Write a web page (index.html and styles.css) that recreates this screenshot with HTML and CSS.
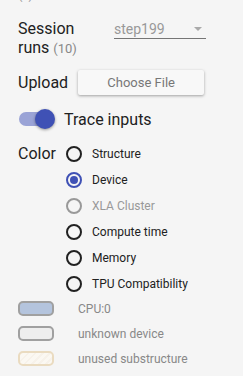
FILE: index.html
```html
<!DOCTYPE html>
<html lang="en">
<head>
  <meta charset="UTF-8" />
  <meta name="viewport" content="width=device-width, initial-scale=1.0"/>
  <title>Graph controls</title>
  <link rel="stylesheet" href="styles.css">
</head>
<body>

  <div class="sidebar">
    <div class="help">(?)</div>

    <div class="row session">
      <div class="session-label">Session<br>runs <span class="count">(10)</span></div>
      <div class="dropdown">
        <span>step199</span>
        <svg width="8" height="4" viewBox="0 0 8 4"><path d="M0 0h8L4 4z" fill="#aaa"/></svg>
      </div>
    </div>

    <div class="row upload">
      <span class="label">Upload</span>
      <button class="file-btn">Choose File</button>
    </div>

    <div class="row toggle-row">
      <div class="toggle"><div class="track"></div><div class="thumb"></div></div>
      <span class="label">Trace inputs</span>
    </div>

    <div class="row color">
      <span class="label color-label">Color</span>
      <div class="radios">
        <div class="radio"><span class="circle"></span>Structure</div>
        <div class="radio checked"><span class="circle"></span>Device</div>
        <div class="radio disabled"><span class="circle"></span>XLA Cluster</div>
        <div class="radio"><span class="circle"></span>Compute time</div>
        <div class="radio"><span class="circle"></span>Memory</div>
        <div class="radio"><span class="circle"></span>TPU Compatibility</div>
      </div>
    </div>

    <div class="legend">
      <div class="legend-item"><span class="swatch cpu"></span>CPU:0</div>
      <div class="legend-item"><span class="swatch unknown"></span>unknown device</div>
      <div class="legend-item"><span class="swatch unused"></span>unused substructure</div>
    </div>
  </div>

</body>
</html>
```

FILE: styles.css
```css
* {
  box-sizing: border-box;
  font-family: Roboto, sans-serif;
}

body {
  margin: 0;
  background: #f5f5f5;
  color: #212121;
}

.sidebar {
  padding-left: 18px;
  width: 243px;
  height: 376px;
  overflow: hidden;
}

.help {
  font-size: 13px;
  color: #999;
  line-height: 14px;
  margin-top: -12px;
}

.row {
  display: flex;
  align-items: center;
}

.label {
  font-size: 16px;
}

.session {
  margin-top: 17px;
  align-items: flex-start;
}

.session-label {
  width: 96px;
  font-size: 16px;
  line-height: 19px;
}

.count {
  font-size: 13px;
  color: #888;
}

.dropdown {
  width: 92px;
  display: flex;
  justify-content: space-between;
  align-items: center;
  border-bottom: 1px solid #757575;
  font-size: 14px;
  color: #999;
  height: 19px;
  margin-top: 1px;
  padding-right: 4px;
}

.upload {
  margin-top: 12px;
}

.file-btn {
  margin-left: 10px;
  width: 126px;
  height: 25px;
  border: none;
  border-radius: 2px;
  background: #f8f8f8;
  box-shadow: 0 1px 3px rgba(0, 0, 0, 0.35);
  font-size: 13px;
  color: #777;
}

.toggle-row {
  margin-top: 14px;
}

.toggle {
  position: relative;
  width: 36px;
  height: 20px;
  margin-left: 1px;
  margin-right: 9px;
}

.track {
  position: absolute;
  left: 0;
  top: 3px;
  width: 32px;
  height: 14px;
  border-radius: 7px;
  background: #9aa3d6;
}

.thumb {
  position: absolute;
  left: 16px;
  top: 0;
  width: 20px;
  height: 20px;
  border-radius: 50%;
  background: #3f51b5;
  box-shadow: 0 1px 3px rgba(0, 0, 0, 0.4);
}

.color {
  margin-top: 17px;
  align-items: flex-start;
}

.color-label {
  width: 48px;
  line-height: 20px;
  margin-top: -2px;
}

.radios {
  display: flex;
  flex-direction: column;
  gap: 10px;
}

.radio {
  display: flex;
  align-items: center;
  font-size: 12px;
  height: 16px;
}

.circle {
  width: 16px;
  height: 16px;
  border: 2px solid #212121;
  border-radius: 50%;
  margin-right: 10px;
  display: flex;
  align-items: center;
  justify-content: center;
}

.checked .circle {
  border-color: #3f51b5;
}

.checked .circle::after {
  content: "";
  width: 8px;
  height: 8px;
  border-radius: 50%;
  background: #3f51b5;
}

.disabled {
  color: #999;
}

.disabled .circle {
  border-color: #999;
}

.legend {
  margin-top: 9px;
  display: flex;
  flex-direction: column;
  gap: 10px;
}

.legend-item {
  display: flex;
  align-items: center;
  font-size: 12px;
  color: #888;
  height: 15px;
}

.swatch {
  width: 36px;
  height: 15px;
  border: 2px solid #a0a0a0;
  border-radius: 5px;
  margin-right: 24px;
}

.cpu {
  background: #b4c4dd;
}

.unknown {
  background: #eee;
}

.unused {
  border-color: #eadbc0;
  background: repeating-linear-gradient(135deg, #f7f2ea 0 2px, #fbf8f2 2px 5px);
}
```
